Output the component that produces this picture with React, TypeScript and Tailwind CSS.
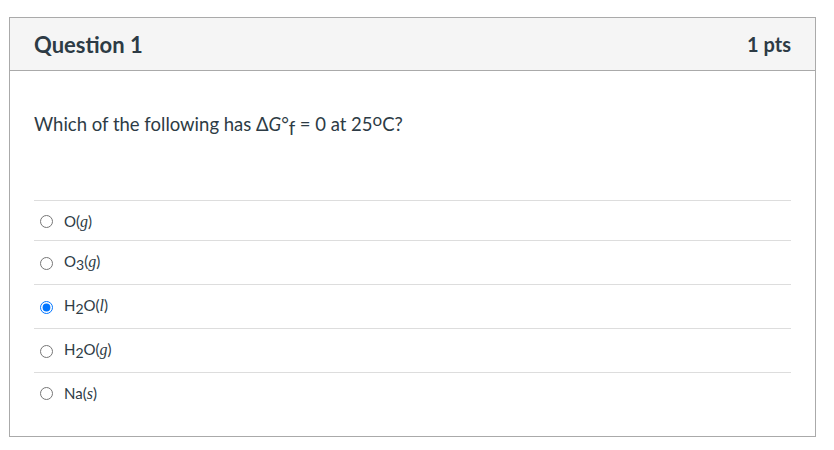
const ANSWERS = [
	{ id: "a", base: "O", sub: "", phase: "g" },
	{ id: "b", base: "O", sub: "3", phase: "g" },
	{ id: "c", base: "H", sub: "2", tail: "O", phase: "l", checked: true },
	{ id: "d", base: "H", sub: "2", tail: "O", phase: "g" },
	{ id: "e", base: "Na", sub: "", phase: "s" },
];

function Formula({ base, sub, tail, phase }: { base: string; sub: string; tail?: string; phase: string }) {
	return (
		<span>
			{base}
			{sub && <span className="align-[-3px] text-[14px] leading-5">{sub}</span>}
			{tail}(<i className="font-['Liberation_Serif',serif] text-[16px] leading-none">{phase}</i>)
		</span>
	);
}

export default function App() {
	return (
		<div className="min-h-[450px] bg-white pl-[9px] pt-[17px] font-['Lato',sans-serif] text-[#2d3b45]">
			<div className="w-[807px] border border-[#aaaaaa]">
				<div className="flex h-[53px] items-center justify-between border-b border-[#aaaaaa] bg-[#f5f5f5] px-6">
					<h2 className="text-[22px] font-bold">Question 1</h2>
					<span className="text-[20px] font-bold">1 pts</span>
				</div>
				<div className="px-6 pb-6">
					<p className="pt-[41px] text-[18.5px] leading-6">
						Which of the following has Δ<i>G</i>°<span className="relative top-[4px]">f</span> = 0 at 25
						<span className="relative -top-[5px] text-[17px]">o</span>C?
					</p>
					<ul className="mt-[63px]">
						{ANSWERS.map((a) => (
							<li
								key={a.id}
								className="flex items-center border-t border-[#dddddd] pt-[10px] pb-[9px] text-[15px] leading-5"
							>
								<input
									type="radio"
									name="q1"
									defaultChecked={a.checked}
									className="ml-[6px] mr-[11px] h-[13px] w-[13px]"
								/>
								<Formula {...a} />
							</li>
						))}
					</ul>
				</div>
			</div>
		</div>
	);
}
